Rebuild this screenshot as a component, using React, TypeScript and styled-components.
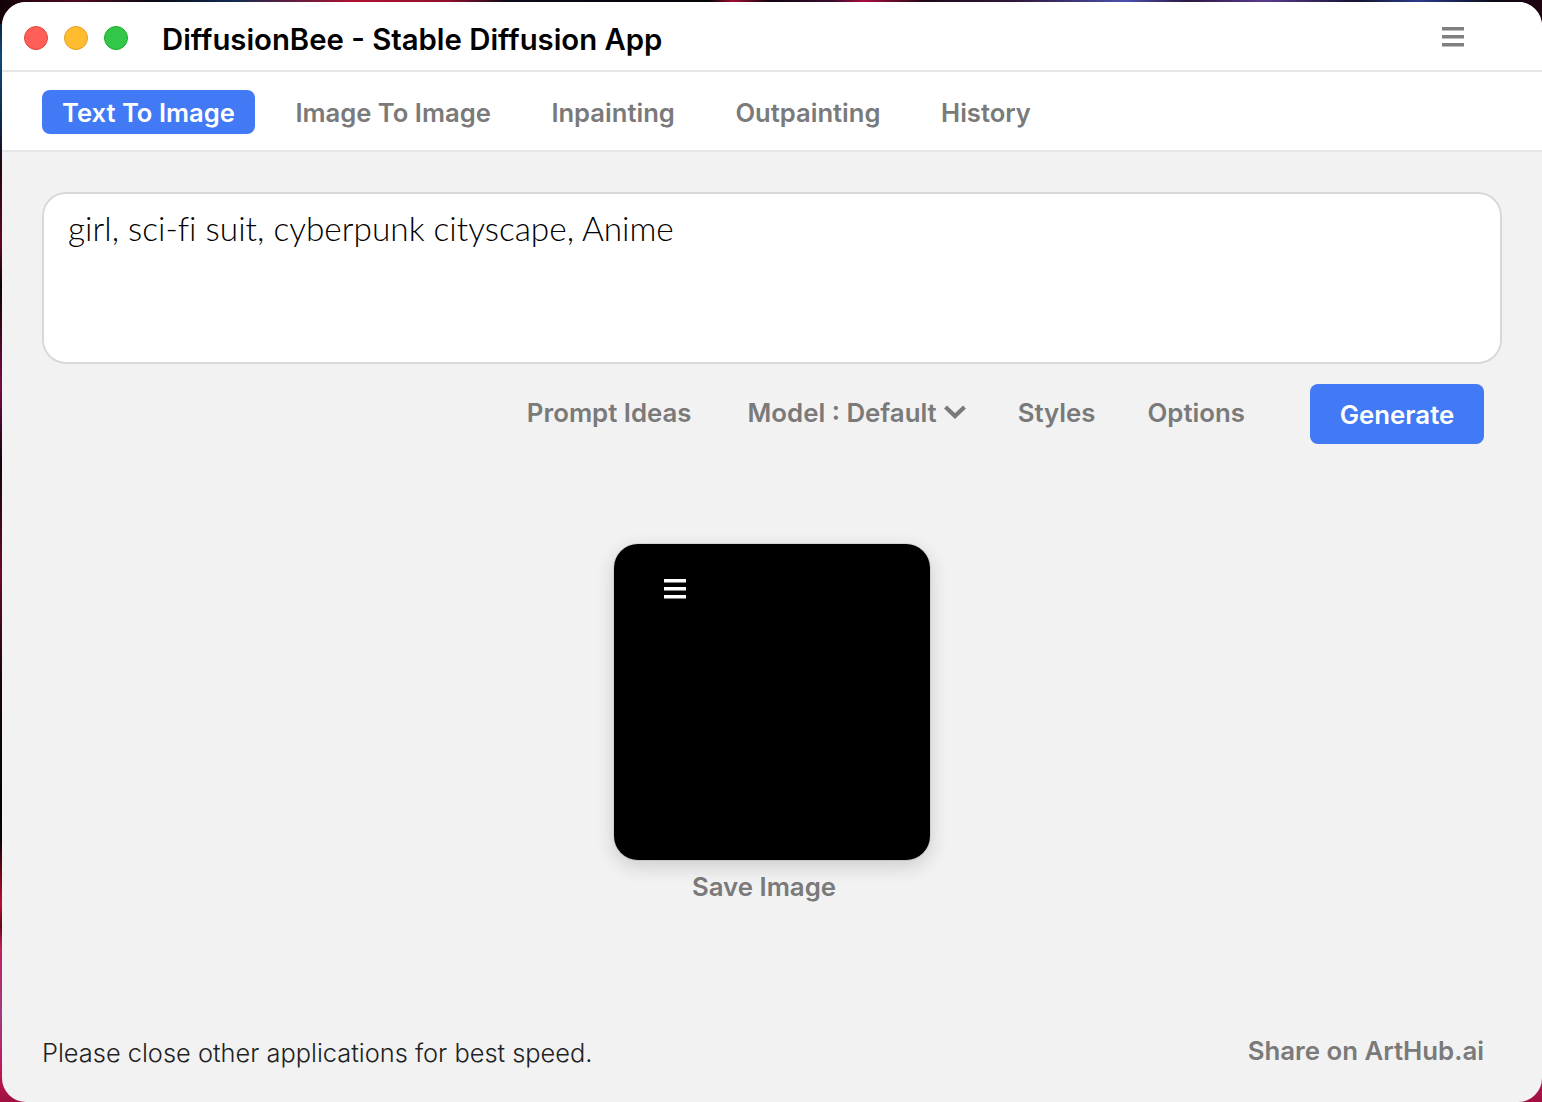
import styled, { createGlobalStyle } from 'styled-components';

const tabs = ['Text To Image', 'Image To Image', 'Inpainting', 'Outpainting', 'History'];

function MenuIcon({ color }: { color: string }) {
  return (
    <svg width="22" height="20" viewBox="0 0 22 20" aria-hidden="true">
      <path d="M0 0h22v3.5H0z" fill={color} />
      <path d="M0 8h22v3.5H0z" fill={color} />
      <path d="M0 16h22v3.5H0z" fill={color} />
    </svg>
  );
}

function Chevron() {
  return (
    <svg width="22" height="14" viewBox="0 0 22 14" aria-hidden="true">
      <path d="M1.5 2l9.5 9 9.5-9" fill="none" stroke="#7a7a7a" strokeWidth="4.2" />
    </svg>
  );
}

export default function App() {
  return (
    <>
      <GlobalStyle />
      <Desktop>
        <AppWindow>
          <TitleBar>
            <TrafficLights>
              <TrafficLight $fill="#ff5f57" $edge="#e0443e" />
              <TrafficLight $fill="#febc2e" $edge="#dea123" />
              <TrafficLight $fill="#32c748" $edge="#1aab29" />
            </TrafficLights>
            <AppTitle>DiffusionBee - Stable Diffusion App</AppTitle>
            <TitleMenu>
              <MenuIcon color="#808080" />
            </TitleMenu>
          </TitleBar>

          <TabBar>
            {tabs.map((tab, i) => (
              <Tab key={tab} $active={i === 0}>
                {tab}
              </Tab>
            ))}
          </TabBar>

          <Content>
            <PromptBox>girl, sci-fi suit, cyberpunk cityscape, Anime</PromptBox>

            <ActionRow>
              <ActionLink>Prompt Ideas</ActionLink>
              <ModelLink>
                Model : Default
                <Chevron />
              </ModelLink>
              <StylesLink>Styles</StylesLink>
              <OptionsLink>Options</OptionsLink>
              <GenerateButton>Generate</GenerateButton>
            </ActionRow>

            <ResultArea>
              <ResultCard>
                <ImageTile>
                  <TileMenu>
                    <MenuIcon color="#ffffff" />
                  </TileMenu>
                </ImageTile>
                <SaveLink>Save Image</SaveLink>
              </ResultCard>
            </ResultArea>

            <Footer>
              <Hint>Please close other applications for best speed.</Hint>
              <ShareLink>Share on ArtHub.ai</ShareLink>
            </Footer>
          </Content>
        </AppWindow>
      </Desktop>
    </>
  );
}

/* ===== styles ===== */

const GlobalStyle = createGlobalStyle`
  html, body {
    margin: 0;
    padding: 0;
  }
  body {
    font-family: Inter, "Liberation Sans", sans-serif;
  }
`;

const Desktop = styled.div`
  width: 1542px;
  height: 1102px;
  overflow: hidden;
  box-sizing: border-box;
  padding: 2px 0 0 2px;
  background:
    linear-gradient(90deg, #120208 0%, #500a20 5%, #0a0a14 10%, #102a50 15%, #b01030 23%, #90102c 29%, #0a0a18 33%, #060408 46%, #a00c30 47.5%, #100410 50%, #3a0a30 54%, #a80c3c 56%, #200818 60%, #30183c 66%, #4a50b0 73%, #2a1840 77%, #5a3a90 82%, #141430 88%, #2a3a8a 92%, #0a0a14 97%, #200410 100%) top / 100% 24px no-repeat,
    linear-gradient(180deg, #0a0a14 0%, #0e4a7c 5%, #0a2a4c 11%, #200410 15%, #600820 22%, #0a0408 26%, #7a0a40 35%, #100410 42%, #6a0828 52%, #140410 62%, #040204 72%, #080204 76%, #c00c30 82%, #600818 84%, #c0205a 86%, #a03a80 92%, #c01858 97%, #a01040 100%);
`;

const AppWindow = styled.div`
  width: 1540px;
  height: 1100px;
  display: flex;
  flex-direction: column;
  overflow: hidden;
  border-radius: 24px;
  background: #f2f2f2;
`;

const TitleBar = styled.div`
  height: 70px;
  box-sizing: border-box;
  flex-shrink: 0;
  display: flex;
  align-items: center;
  padding: 4px 78px 0 22px;
  background: #fff;
  border-bottom: 2px solid #e6e6e6;
`;

const TrafficLights = styled.div`
  display: flex;
  gap: 16px;
  margin-right: 34px;
`;

const TrafficLight = styled.span<{ $fill: string; $edge: string }>`
  width: 24px;
  height: 24px;
  box-sizing: border-box;
  border-radius: 50%;
  background: ${(props) => props.$fill};
  border: 1px solid ${(props) => props.$edge};
`;

const AppTitle = styled.h1`
  flex: 1;
  margin: 2px 0 0;
  font-size: 29.3px;
  font-weight: 600;
  color: #000;
  white-space: nowrap;
`;

const TitleMenu = styled.div`
  display: flex;
  margin-top: -2px;
`;

const TabBar = styled.nav`
  height: 80px;
  box-sizing: border-box;
  flex-shrink: 0;
  display: flex;
  align-items: center;
  gap: 20.6px;
  padding: 2px 0 0 40px;
  background: #fff;
  border-bottom: 2px solid #e6e6e6;
`;

const Tab = styled.button<{ $active: boolean }>`
  height: 44px;
  padding: 0 20px;
  border: 0;
  border-radius: 8px;
  font-family: inherit;
  font-size: 25.6px;
  font-weight: 600;
  color: ${(props) => (props.$active ? '#fff' : '#7a7a7a')};
  background: ${(props) => (props.$active ? '#4279f4' : 'transparent')};
`;

const Content = styled.main`
  flex: 1;
  display: flex;
  flex-direction: column;
  padding: 40px 58px 34px 40px;
  min-height: 0;
`;

const PromptBox = styled.div`
  width: 1460px;
  height: 172px;
  box-sizing: border-box;
  padding: 14px 24px;
  border: 2px solid #d6dadd;
  border-radius: 24px;
  background: #fff;
  font-family: Lato, "Open Sans", sans-serif;
  font-size: 33.4px;
  font-weight: 300;
  font-variant-ligatures: none;
  line-height: 40px;
  color: #000;
`;

const ActionRow = styled.div`
  display: flex;
  align-items: center;
  justify-content: flex-end;
  height: 60px;
  margin-top: 20px;
`;

const ActionLink = styled.span`
  font-size: 25.8px;
  font-weight: 600;
  color: #7a7a7a;
  white-space: nowrap;
  margin-top: -4px;
`;

const ModelLink = styled(ActionLink)`
  display: flex;
  align-items: center;
  gap: 7px;
  margin-left: 56px;
`;

const StylesLink = styled(ActionLink)`
  margin-left: 52px;
`;

const OptionsLink = styled(ActionLink)`
  margin-left: 52px;
`;

const GenerateButton = styled.button`
  width: 174px;
  height: 60px;
  margin-left: 65px;
  border: 0;
  border-radius: 8px;
  background: #4279f4;
  color: #fff;
  font-family: inherit;
  font-size: 25.8px;
  font-weight: 600;
`;

const ResultArea = styled.div`
  flex: 1;
  display: flex;
  justify-content: center;
  padding: 100px 0 0 18px;
`;

const ResultCard = styled.div`
  display: flex;
  flex-direction: column;
  align-items: center;
`;

const ImageTile = styled.div`
  position: relative;
  width: 316px;
  height: 316px;
  border-radius: 24px;
  background: #000;
  box-shadow: 0 0 0 1px rgba(0, 0, 0, 0.08), 0 6px 20px rgba(0, 0, 0, 0.16);
`;

const TileMenu = styled.div`
  position: absolute;
  top: 35px;
  left: 50px;
  display: flex;
`;

const SaveLink = styled.span`
  margin: 11px 16px 0 0;
  font-size: 25.8px;
  font-weight: 600;
  color: #7a7a7a;
`;

const Footer = styled.footer`
  display: flex;
  justify-content: space-between;
  align-items: center;
`;

const Hint = styled.span`
  font-size: 25.4px;
  font-weight: 300;
  color: #222;
  margin-top: 2px;
`;

const ShareLink = styled.span`
  font-size: 25.8px;
  font-weight: 600;
  color: #7a7a7a;
  margin-top: -2px;
`;
